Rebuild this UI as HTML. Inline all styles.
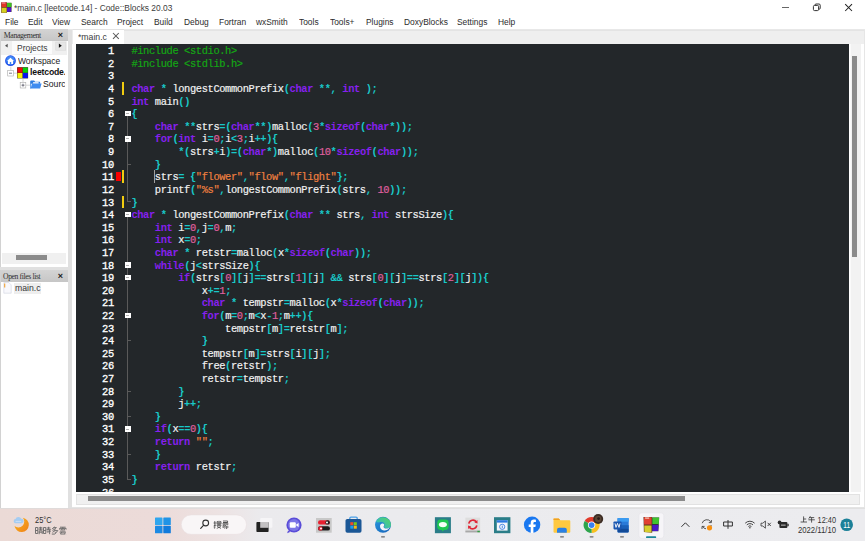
<!DOCTYPE html>
<html><head><meta charset="utf-8">
<style>
*{margin:0;padding:0;box-sizing:border-box}
html,body{width:865px;height:541px;overflow:hidden;background:#efefef;font-family:"Liberation Sans",sans-serif}
.abs{position:absolute}
#title{left:0;top:0;width:865px;height:15px;background:#fff}
#title .t{left:14px;top:1.5px;font-size:9.6px;line-height:12px;color:#3c3c3c;white-space:nowrap;transform-origin:0 0;transform:scaleX(.873)}
#menu{left:0;top:15px;width:865px;height:14.500px;background:#fff;border-bottom:1px solid #e8e8e8}
#menu span{position:absolute;top:0;font-size:9.6px;line-height:13px;color:#2c2c2c;white-space:nowrap;transform-origin:0 0;transform:scaleX(.875)}
/* left panels */
.panel{background:#fff;border-left:1px solid #d2d2d2;overflow:hidden}
#mgmt{left:-0.500px;top:29px;width:68px;height:237.800px}
#ofl{left:-0.500px;top:270.300px;width:68px;height:237.500px}
.phead{left:0;top:0;width:67px;height:11.500px;background:linear-gradient(#d4d4d4,#c6c6c6);font-family:"Liberation Serif",serif;font-size:7.8px;line-height:13px;color:#303030;padding-left:3.2px;letter-spacing:-0.35px;white-space:nowrap}
.px{left:57.300px;top:0.500px;font-size:9px;line-height:10px;color:#222;font-weight:bold}
.tree{font-size:9.8px;line-height:12px;color:#222;white-space:nowrap;transform-origin:0 0;transform:scaleX(.885)}
/* editor */
#nb{left:71.500px;top:30px;width:793px;height:477px;background:#fff}
#tabstrip{left:123.500px;top:29.500px;width:741.500px;height:14.500px;background:#efefef;border-top:1px solid #e4e4e4}
#tab{left:71.500px;top:29.400px;width:52px;height:14.800px;background:#fff;border-top:0.700px solid #e2e2e2;border-left:1px solid #ececec}
#editor{left:75.800px;top:44.200px;width:773px;height:447.800px;background:#23272a;overflow:hidden}
.ln{position:relative;height:12.62px;white-space:pre;font-family:"Liberation Mono",monospace;font-size:10.4px;line-height:12.62px;letter-spacing:-0.378px;color:#f2f2f2;-webkit-text-stroke:0.18px}
.no{position:absolute;left:0;width:38px;text-align:right;color:#fff;-webkit-text-stroke:0.32px}
.cd{position:absolute;left:55.600px}
.p{color:#14a814}
.k{color:#8620ee;font-weight:bold;-webkit-text-stroke:0}
.o{color:#19c8c8;font-weight:bold;-webkit-text-stroke:0}
.n{color:#e060a0}
.s{color:#f08040}
#lines{position:absolute;left:0;top:1px;width:100%}
.fb{position:absolute;left:49px;width:5.900px;height:5.700px;background:#fff}
.fb:after{content:"";position:absolute;left:1.200px;top:2.400px;width:3.500px;height:0.900px;background:#b0b0b0}
.fl{position:absolute;left:51.500px;width:1px;background:#5a5a5a}
.ft{position:absolute;left:51.500px;width:3.500px;height:1px;background:#5a5a5a}
.yb{position:absolute;left:46.200px;width:2.200px;height:12.620px;background:#f0cc10}
/* scrollbars */
.thumb{background:#8b8b8b}
/* taskbar */
#tb{left:0;top:508px;width:865px;height:33px;background:linear-gradient(90deg,#ebdad6 0%,#ecdbd9 18%,#ede2e2 25%,#ebeaed 30%,#ebebee 45%,#ececef 100%);box-shadow:inset 0 0.800px 0 #dcdcdc}
</style></head><body>
<div id="title" class="abs">
 <svg class="abs" style="left:1.200px;top:1.900px" width="11" height="11" viewBox="0 0 11 11"><rect x="0.200" y="0.300" width="5.700" height="10.600" fill="#5a3020"/><rect x="5.600" y="0.800" width="4.900" height="9.200" fill="#403030"/><rect x="0.500" y="0.300" width="5" height="4.800" fill="#e23628"/><rect x="0.800" y="0.300" width="3.600" height="1.300" fill="#f08890"/><rect x="6" y="0.900" width="4.500" height="4.100" fill="#3fc020"/><rect x="0.600" y="5.700" width="5" height="5" fill="#d6d020"/><rect x="6" y="5.500" width="4.100" height="4.300" fill="#5014d0"/></svg>
 <div class="abs t">*main.c [leetcode.14] - Code::Blocks 20.03</div>
 <svg class="abs" style="left:780px;top:0" width="85" height="15" viewBox="0 0 85 15"><path d="M2 7.5h7" stroke="#555" stroke-width="0.9" fill="none"/><rect x="33.400" y="5.400" width="5.200" height="5.200" rx="1.200" stroke="#333" stroke-width="1" fill="none"/><path d="M35 5.400v-0.400a1 1 0 0 1 1 -1h3a1.200 1.200 0 0 1 1.200 1.200v3a1 1 0 0 1 -1 1h-0.600" stroke="#333" stroke-width="1" fill="none"/><path d="M65.200 4.200l6.800 6.800M72 4.200l-6.800 6.800" stroke="#222" stroke-width="1.050" fill="none"/></svg>
</div>
<div id="menu" class="abs">
<span style="left:5px">File</span><span style="left:28px">Edit</span><span style="left:52px">View</span><span style="left:81px">Search</span><span style="left:117px">Project</span><span style="left:153.500px">Build</span><span style="left:183.500px">Debug</span><span style="left:218.500px">Fortran</span><span style="left:256px">wxSmith</span><span style="left:299px">Tools</span><span style="left:329.500px">Tools+</span><span style="left:365.500px">Plugins</span><span style="left:403.500px">DoxyBlocks</span><span style="left:457px">Settings</span><span style="left:497.500px">Help</span>
</div>

<div class="abs" style="left:0;top:29.500px;width:71.500px;height:478.500px;background:#e0e0e0"></div>
<!-- Management panel -->
<div id="mgmt" class="abs panel">
 <div class="abs phead">Management</div>
 <div class="abs px">×</div>
 <div class="abs" style="left:0;top:11.500px;width:66px;height:14px;background:#f0f0f0"></div>
 <div class="abs" style="left:11.300px;top:12px;width:40px;height:13.200px;background:#fbfbfb"></div>
 <div class="abs tree" style="left:16.200px;top:12.500px;font-size:9.8px;color:#3a3a3a;transform:scaleX(.862)">Projects</div>
 <svg class="abs" style="left:-0.600px;top:10.900px" width="67" height="14" viewBox="0 0 67 14"><path d="M7.700 3.800v3.800l-2.700-1.900z" fill="#505050"/><rect x="55.800" y="2" width="10" height="8.200" fill="#e6e6e6" stroke="#d4d4d4" stroke-width="0.500"/><path d="M58.900 3.600v4.200l2.900-2.100z" fill="#111"/></svg>
 <!-- tree -->
 <svg class="abs" style="left:0;top:26px" width="66" height="40" viewBox="0 0 66 40">
  <path d="M9.800 11.500v4M12.500 18.200h4 M22 24v4M25 30.200h4" stroke="#bbb" stroke-width="0.6" fill="none"/>
  <circle cx="9.500" cy="5.700" r="5.400" fill="#2450e8"/><circle cx="9.500" cy="5.300" r="4.400" fill="#3f86f5"/>
  <path d="M6 6l3.500-3.200 3.500 3.200h-1v2.900h-1.800v-2h-1.400v2h-1.800v-2.900z" fill="#fff"/>
  <rect x="6.700" y="15.400" width="5.600" height="5.600" fill="#fff" stroke="#aaa" stroke-width="0.6"/><path d="M8 18.200h3" stroke="#445" stroke-width="0.7"/>
  <rect x="16.100" y="12.200" width="11" height="11.200" fill="#403020"/><rect x="16.500" y="12.600" width="5" height="5.100" fill="#f00808"/><rect x="21.800" y="12.600" width="5" height="5.100" fill="#08d008"/><rect x="16.500" y="18" width="5" height="5.100" fill="#f4f008"/><rect x="21.800" y="18" width="5" height="5.100" fill="#0810f0"/>
  <rect x="19.200" y="27.400" width="5.600" height="5.600" fill="#fff" stroke="#aaa" stroke-width="0.6"/><path d="M20.500 30.200h3M22 28.700v3" stroke="#445" stroke-width="0.7"/>
  <g transform="translate(0.600,-0.900)"><path d="M29 26.500h3.500l1 1.200h5v2h-9.500z" fill="#2f7de0"/><path d="M31.500 28h5.500v2h-5.500z" fill="#e8f0fc"/><path d="M29 34.500l1.500-5h9.500l-1.500 5z" fill="#3f8cf0"/><path d="M29 27v7.500" stroke="#2f7de0" stroke-width="0.800"/></g>
 </svg>
 <div class="abs tree" style="left:17.500px;top:25.700px;transform:scaleX(.866)">Workspace</div>
 <div class="abs tree" style="left:29.300px;top:37.400px;font-weight:bold;color:#111;letter-spacing:-0.2px">leetcode.</div>
 <div class="abs tree" style="left:42.200px;top:49px">Source</div>
 <div class="abs" style="left:64.800px;top:26px;width:3px;height:40px;background:#fff"></div>
 <!-- h scrollbar -->
 <div class="abs" style="left:1.500px;top:223.500px;width:63.700px;height:11px;background:#f0f0f0"></div>
 <div class="abs thumb" style="left:15px;top:226.400px;width:31.300px;height:5px"></div>
</div>

<!-- Open files list -->
<div id="ofl" class="abs panel">
 <div class="abs phead" style="font-size:7.6px;padding-left:2.500px">Open files list</div>
 <div class="abs px">×</div>
 <svg class="abs" style="left:2.500px;top:12px" width="9" height="12" viewBox="0 0 9 12"><path d="M0.800 0.500h5l2.400 2.400v8.300h-7.400z" fill="#f8f8fc" stroke="#d0d4e0" stroke-width="0.6"/><path d="M1.700 1.500v4" stroke="#f0a030" stroke-width="1.100"/></svg>
 <div class="abs" style="left:13.300px;top:12.300px;width:26.800px;height:11px;background:#eeeeee"></div>
 <div class="abs tree" style="left:14.200px;top:11.400px;color:#333">main.c</div>
</div>

<!-- notebook / editor -->
<div id="nb" class="abs"></div>
<div id="tabstrip" class="abs"></div>
<div id="tab" class="abs">
 <div class="abs" style="left:5.300px;top:-0.500px;font-size:9.8px;line-height:13px;color:#3a3a3a;white-space:nowrap;transform-origin:0 0;transform:scaleX(.885)">*main.c</div>
 <svg class="abs" style="left:39.300px;top:2.100px" width="8" height="8" viewBox="0 0 8 8"><path d="M1 1l5.800 5.800M6.800 1l-5.800 5.800" stroke="#5a5a5a" stroke-width="1.050"/></svg>
</div>
<div id="editor" class="abs">
<div id="lines">
<div class="ln"><span class="no">1</span><span class="cd"><span class="p">#include &lt;stdio.h&gt;</span></span></div>
<div class="ln"><span class="no">2</span><span class="cd"><span class="p">#include &lt;stdlib.h&gt;</span></span></div>
<div class="ln"><span class="no">3</span><span class="cd"></span></div>
<div class="ln"><span class="no">4</span><span class="cd"><span class="k">char</span> <span class="o">*</span> longestCommonPrefix<span class="o">(</span><span class="k">char</span> <span class="o">*</span><span class="o">*</span><span class="o">,</span> <span class="k">int</span> <span class="o">)</span><span class="o">;</span></span></div>
<div class="ln"><span class="no">5</span><span class="cd"><span class="k">int</span> main<span class="o">(</span><span class="o">)</span></span></div>
<div class="ln"><span class="no">6</span><span class="cd"><span class="o">{</span></span></div>
<div class="ln"><span class="no">7</span><span class="cd">    <span class="k">char</span> <span class="o">*</span><span class="o">*</span>strs<span class="o">=</span><span class="o">(</span><span class="k">char</span><span class="o">*</span><span class="o">*</span><span class="o">)</span>malloc<span class="o">(</span><span class="n">3</span><span class="o">*</span><span class="k">sizeof</span><span class="o">(</span><span class="k">char</span><span class="o">*</span><span class="o">)</span><span class="o">)</span><span class="o">;</span></span></div>
<div class="ln"><span class="no">8</span><span class="cd">    <span class="k">for</span><span class="o">(</span><span class="k">int</span> i<span class="o">=</span><span class="n">0</span><span class="o">;</span>i<span class="o">&lt;</span><span class="n">3</span><span class="o">;</span>i<span class="o">+</span><span class="o">+</span><span class="o">)</span><span class="o">{</span></span></div>
<div class="ln"><span class="no">9</span><span class="cd">        <span class="o">*</span><span class="o">(</span>strs<span class="o">+</span>i<span class="o">)</span><span class="o">=</span><span class="o">(</span><span class="k">char</span><span class="o">*</span><span class="o">)</span>malloc<span class="o">(</span><span class="n">10</span><span class="o">*</span><span class="k">sizeof</span><span class="o">(</span><span class="k">char</span><span class="o">)</span><span class="o">)</span><span class="o">;</span></span></div>
<div class="ln"><span class="no">10</span><span class="cd">    <span class="o">}</span></span></div>
<div class="ln"><span class="no">11</span><span class="cd">    strs<span class="o">=</span> <span class="o">{</span><span class="s">&quot;flower&quot;</span><span class="o">,</span><span class="s">&quot;flow&quot;</span><span class="o">,</span><span class="s">&quot;flight&quot;</span><span class="o">}</span><span class="o">;</span></span></div>
<div class="ln"><span class="no">12</span><span class="cd">    printf<span class="o">(</span><span class="s">&quot;%s&quot;</span><span class="o">,</span>longestCommonPrefix<span class="o">(</span>strs<span class="o">,</span> <span class="n">10</span><span class="o">)</span><span class="o">)</span><span class="o">;</span></span></div>
<div class="ln"><span class="no">13</span><span class="cd"><span class="o">}</span></span></div>
<div class="ln"><span class="no">14</span><span class="cd"><span class="k">char</span> <span class="o">*</span> longestCommonPrefix<span class="o">(</span><span class="k">char</span> <span class="o">*</span><span class="o">*</span> strs<span class="o">,</span> <span class="k">int</span> strsSize<span class="o">)</span><span class="o">{</span></span></div>
<div class="ln"><span class="no">15</span><span class="cd">    <span class="k">int</span> i<span class="o">=</span><span class="n">0</span><span class="o">,</span>j<span class="o">=</span><span class="n">0</span><span class="o">,</span>m<span class="o">;</span></span></div>
<div class="ln"><span class="no">16</span><span class="cd">    <span class="k">int</span> x<span class="o">=</span><span class="n">0</span><span class="o">;</span></span></div>
<div class="ln"><span class="no">17</span><span class="cd">    <span class="k">char</span> <span class="o">*</span> retstr<span class="o">=</span>malloc<span class="o">(</span>x<span class="o">*</span><span class="k">sizeof</span><span class="o">(</span><span class="k">char</span><span class="o">)</span><span class="o">)</span><span class="o">;</span></span></div>
<div class="ln"><span class="no">18</span><span class="cd">    <span class="k">while</span><span class="o">(</span>j<span class="o">&lt;</span>strsSize<span class="o">)</span><span class="o">{</span></span></div>
<div class="ln"><span class="no">19</span><span class="cd">        <span class="k">if</span><span class="o">(</span>strs<span class="o">[</span><span class="n">0</span><span class="o">]</span><span class="o">[</span>j<span class="o">]</span><span class="o">=</span><span class="o">=</span>strs<span class="o">[</span><span class="n">1</span><span class="o">]</span><span class="o">[</span>j<span class="o">]</span> <span class="o">&amp;</span><span class="o">&amp;</span> strs<span class="o">[</span><span class="n">0</span><span class="o">]</span><span class="o">[</span>j<span class="o">]</span><span class="o">=</span><span class="o">=</span>strs<span class="o">[</span><span class="n">2</span><span class="o">]</span><span class="o">[</span>j<span class="o">]</span><span class="o">)</span><span class="o">{</span></span></div>
<div class="ln"><span class="no">20</span><span class="cd">            x<span class="o">+</span><span class="o">=</span><span class="n">1</span><span class="o">;</span></span></div>
<div class="ln"><span class="no">21</span><span class="cd">            <span class="k">char</span> <span class="o">*</span> tempstr<span class="o">=</span>malloc<span class="o">(</span>x<span class="o">*</span><span class="k">sizeof</span><span class="o">(</span><span class="k">char</span><span class="o">)</span><span class="o">)</span><span class="o">;</span></span></div>
<div class="ln"><span class="no">22</span><span class="cd">            <span class="k">for</span><span class="o">(</span>m<span class="o">=</span><span class="n">0</span><span class="o">;</span>m<span class="o">&lt;</span>x<span class="o">-</span><span class="n">1</span><span class="o">;</span>m<span class="o">+</span><span class="o">+</span><span class="o">)</span><span class="o">{</span></span></div>
<div class="ln"><span class="no">23</span><span class="cd">                tempstr<span class="o">[</span>m<span class="o">]</span><span class="o">=</span>retstr<span class="o">[</span>m<span class="o">]</span><span class="o">;</span></span></div>
<div class="ln"><span class="no">24</span><span class="cd">            <span class="o">}</span></span></div>
<div class="ln"><span class="no">25</span><span class="cd">            tempstr<span class="o">[</span>m<span class="o">]</span><span class="o">=</span>strs<span class="o">[</span>i<span class="o">]</span><span class="o">[</span>j<span class="o">]</span><span class="o">;</span></span></div>
<div class="ln"><span class="no">26</span><span class="cd">            free<span class="o">(</span>retstr<span class="o">)</span><span class="o">;</span></span></div>
<div class="ln"><span class="no">27</span><span class="cd">            retstr<span class="o">=</span>tempstr<span class="o">;</span></span></div>
<div class="ln"><span class="no">28</span><span class="cd">        <span class="o">}</span></span></div>
<div class="ln"><span class="no">29</span><span class="cd">        j<span class="o">+</span><span class="o">+</span><span class="o">;</span></span></div>
<div class="ln"><span class="no">30</span><span class="cd">    <span class="o">}</span></span></div>
<div class="ln"><span class="no">31</span><span class="cd">    <span class="k">if</span><span class="o">(</span>x<span class="o">=</span><span class="o">=</span><span class="n">0</span><span class="o">)</span><span class="o">{</span></span></div>
<div class="ln"><span class="no">32</span><span class="cd">    <span class="k">return</span> <span class="s">&quot;&quot;</span><span class="o">;</span></span></div>
<div class="ln"><span class="no">33</span><span class="cd">    <span class="o">}</span></span></div>
<div class="ln"><span class="no">34</span><span class="cd">    <span class="k">return</span> retstr<span class="o">;</span></span></div>
<div class="ln"><span class="no">35</span><span class="cd"><span class="o">}</span></span></div>
<div class="ln"><span class="no">36</span><span class="cd"></span></div>
</div>
<div class="fl" style="top:69.41px;height:88.34px"></div>
<div class="fl" style="top:170.37px;height:265.02px"></div>
<div class="ft" style="top:119.39px"></div>
<div class="ft" style="top:157.25px"></div>
<div class="ft" style="top:296.07px"></div>
<div class="ft" style="top:346.55px"></div>
<div class="ft" style="top:371.79px"></div>
<div class="ft" style="top:409.65px"></div>
<div class="ft" style="top:434.89px"></div>
<div class="fb" style="top:66.56px"></div>
<div class="fb" style="top:91.80px"></div>
<div class="fb" style="top:167.52px"></div>
<div class="fb" style="top:218.00px"></div>
<div class="fb" style="top:230.62px"></div>
<div class="fb" style="top:268.48px"></div>
<div class="fb" style="top:382.06px"></div>
<div class="yb" style="top:37.86px"></div>
<div class="yb" style="top:126.20px"></div>
<div class="yb" style="top:151.44px"></div>
<div style="position:absolute;left:40.2px;top:128.00px;width:5.3px;height:9px;background:#f80000"></div>
<div style="position:absolute;left:78.3px;top:126.20px;width:0.8px;height:12.6px;background:#a0a0a0"></div>
</div>
<!-- v scrollbar -->
<div class="abs" style="left:849.500px;top:44px;width:11px;height:448px;background:#f2f2f2;border-left:1px solid #fafafa"></div>
<div class="abs thumb" style="left:852.300px;top:56px;width:5.200px;height:200.500px"></div>
<div class="abs" style="left:863.500px;top:29.500px;width:1.500px;height:478px;background:#e6e6e6"></div>
<!-- h scrollbar -->
<div class="abs" style="left:75.800px;top:494px;width:784.500px;height:10.500px;background:#f0f0f0;border:1px solid #e2e2e2"></div>
<div class="abs thumb" style="left:87.500px;top:496.300px;width:597px;height:4.400px"></div>
<div class="abs" style="left:71.500px;top:506.500px;width:793px;height:1.500px;background:#e4e4e4"></div>

<!-- taskbar -->
<div id="tb" class="abs">
<svg class="abs" style="left:0;top:0" width="865" height="33" viewBox="0 508 865 33" font-family="Liberation Sans, sans-serif">
<defs>
<linearGradient id="moon" x1="0" y1="0" x2="1" y2="1"><stop offset="0" stop-color="#f8b820"/><stop offset="1" stop-color="#f08018"/></linearGradient>
<linearGradient id="edge1" x1="0" y1="0" x2="1" y2="1"><stop offset="0" stop-color="#2a9adf"/><stop offset="1" stop-color="#1560b8"/></linearGradient>
<linearGradient id="edge2" x1="0" y1="1" x2="1" y2="0"><stop offset="0" stop-color="#2ab0d8"/><stop offset="1" stop-color="#58d860"/></linearGradient>
</defs>
<!-- weather -->
<path d="M14.51 526.03A7.2 7.2 0 1 0 22.83 517.71A5.9 5.9 0 0 1 14.51 526.03z" fill="url(#moon)"/>
<path d="M15.200 523.200a2.100 2.100 0 0 1 0.300 -4.100a3.100 3.100 0 0 1 5.800 -0.300a2.200 2.200 0 0 1 0.300 4.400z" fill="#a4ccf2"/><path d="M15.600 521.400h5.600" stroke="#d8e8fa" stroke-width="0.700"/>
<text x="35" y="522.700" font-size="8.800" fill="#303030" textLength="16.600" lengthAdjust="spacingAndGlyphs">25°C</text>
<!-- CJK approx: 晴時多雲 -->
<g stroke="#666" stroke-width="0.900" fill="none">
 <path d="M35.500 527.500h2.300v6h-2.300zM35.500 530.500h2.300 M38.800 527.800h3.600M38.600 529.200h4M40.600 526.800v3.400M39.200 530.800h3v3.200M39.200 530.800v3.400M39.200 532.200h3"/>
 <path d="M43.500 527.500h2.300v6h-2.300zM43.500 530.500h2.300 M46.800 528h3.600M48.600 526.800v2.600M46.600 529.600h4.200M46.800 531.200h4M49.600 530v4.200M47.600 532.200l0.800 0.800"/>
 <path d="M54.500 526.800l-2.600 2.400M53.800 527.600h2.600l-4 3.200M53.500 528.800l1 0.800 M55.500 529.800l-3 2.800M54.800 530.600h3l-3 3.500h-3M54.500 531.800l1.200 0.900"/>
 <path d="M60 527.200h5.600M59.500 528.400h6.600v1.200M59.500 528.400v1.200M62.800 527.200v3M60.600 529.400h1.400M63.600 529.400h1.400M60.200 531h5M59.600 532.200h6.400M61.800 532.200l-1.400 1.800h4.600M64.500 533l1 1.200"/>
</g>
<!-- windows logo -->
<rect x="155" y="517.500" width="7.500" height="7.500" rx="0.600" fill="#2fa6ee"/><rect x="163.300" y="517.500" width="7.500" height="7.500" rx="0.600" fill="#1f93e6"/><rect x="155" y="525.800" width="7.500" height="7.500" rx="0.600" fill="#1c8ae4"/><rect x="163.300" y="525.800" width="7.500" height="7.500" rx="0.600" fill="#117bdc"/>
<!-- search pill -->
<rect x="181.300" y="514.900" width="65.200" height="19.400" rx="9.700" fill="#f9f6f7" stroke="#eadfe0" stroke-width="0.600"/>
<circle cx="205.700" cy="523" r="2.900" fill="none" stroke="#333" stroke-width="1.100"/><path d="M203.700 525.200l-3 3.200" stroke="#333" stroke-width="1.200" stroke-linecap="round"/>
<g stroke="#444" stroke-width="0.800" fill="none">
 <path d="M213.600 523h2.400M214.800 521v7.200l-1 -0.400M213.600 526l2.400 -1 M217 521.600h1.400M219.600 521.600h1.400M217 521.600v2.600h4v-2.600M217 523h4M219 520.800v4.400M216.600 525.400h4.800M217.200 526.400l3.800 2M220.800 526.400l-4 2"/>
 <path d="M223 521h4.600v1.600h-4.600M223 522.600h4.600M222.400 523.800h6M223.200 524.800h2.200v1.200h-2.200zM226.200 524.800h2M222.200 527h6.400M226.800 526v2.600l-1 -0.200M223.600 527.600l1 0.800"/>
</g>
<!-- task view -->
<rect x="260.200" y="518" width="12.200" height="9.800" rx="1" fill="#f6f5f7"/><rect x="256.400" y="522" width="12.200" height="10" rx="0.800" fill="#222"/><rect x="260.200" y="522" width="8.400" height="5.800" fill="#c2c0c2"/>
<!-- chat -->
<circle cx="294" cy="525" r="7.600" fill="#5a4cd8"/><path d="M288 530.500l-0.800 2.700l3.400 -1.500z" fill="#5a4cd8"/><circle cx="294" cy="525" r="5.900" fill="#7c76e6"/>
<rect x="289.800" y="522.300" width="6" height="5.400" rx="1" fill="#fff"/><path d="M296.200 524.600l2.400 -1.600v4l-2.400 -1.600z" fill="#fff"/>
<!-- toggles icon -->
<rect x="316" y="518" width="15.700" height="14.700" fill="#c8c8c8"/><rect x="318" y="520.200" width="12" height="4.400" rx="2.200" fill="#e82030"/><circle cx="327.600" cy="522.400" r="2.200" fill="#222"/><circle cx="327" cy="522.400" r="1" fill="#fff"/>
<rect x="318" y="526.200" width="12" height="4.400" rx="2.200" fill="#1a1a1a"/><circle cx="320.400" cy="528.400" r="2.200" fill="#e82030"/><circle cx="321" cy="528.400" r="1" fill="#fff"/>
<!-- store -->
<path d="M349.800 519.500v-1.200a1.200 1.200 0 0 1 1.200 -1.200h5a1.200 1.200 0 0 1 1.200 1.200v1.200" fill="none" stroke="#4aa0e8" stroke-width="1.300"/>
<rect x="345.500" y="519" width="16" height="13.700" rx="1.800" fill="#1b5796"/>
<rect x="350.300" y="522.200" width="3" height="3" fill="#f04a28"/><rect x="353.800" y="522.200" width="3" height="3" fill="#78c818"/><rect x="350.300" y="525.700" width="3" height="3" fill="#18a0f0"/><rect x="353.800" y="525.700" width="3" height="3" fill="#f8b810"/>
<!-- edge -->
<circle cx="383" cy="524.800" r="8" fill="url(#edge1)"/>
<path d="M376 521.500a8 8 0 0 1 15 3.300c0 2.600 -2.200 3.800 -4.400 3.800c-1.600 0 -2.600 -0.800 -2.600 -1.800c0 -0.700 0.600 -1.100 0.600 -2.100c0 -1.400 -1.500 -2.600 -3.400 -2.600c-2.200 0 -4.200 1 -5.200 -0.600z" fill="url(#edge2)"/>
<path d="M384.200 524.700c0 1 -0.600 1.400 -0.600 2.100c0 1 1 1.800 2.600 1.800c1.400 0 2.600 -0.400 3.400 -1.300c-1 2.300 -3.300 3.400 -5.600 3.200c-2.600 -0.300 -4.200 -2.400 -4 -4.500c0.100 -1.500 1.200 -2.600 2.300 -2.600c1.200 0 1.900 0.600 1.900 1.300z" fill="#f4f4f8"/>
<rect x="381" y="536.200" width="4" height="1.200" rx="0.600" fill="#6a6a6a"/>
<!-- LINE -->
<rect x="434.900" y="517.200" width="16" height="16" fill="#2a7d88"/><rect x="437.200" y="519.600" width="11.400" height="10.400" rx="3.400" fill="#1ec850"/><path d="M441.500 529.600l1.200 2l1.600 -2z" fill="#1ec850"/><ellipse cx="442.900" cy="524.600" rx="4" ry="2.600" fill="#f4fff6"/>
<!-- refresh -->
<rect x="465.400" y="517.600" width="14.800" height="14.800" fill="#dedede"/><rect x="465.400" y="530.600" width="14.800" height="1.800" fill="#a8a8a8"/><rect x="477.400" y="530.800" width="2.400" height="1.400" fill="#30a040"/>
<path d="M468.800 523.600a4.200 4.200 0 0 1 7.600 -1.600M476.800 525.400a4.200 4.200 0 0 1 -7.600 1.600" fill="none" stroke="#e02838" stroke-width="1.600"/><path d="M477.400 520l0.200 3.400l-3.200 -0.800zM468.200 529l-0.200 -3.400l3.200 0.800z" fill="#e02838"/>
<!-- blue window -->
<rect x="494" y="517.200" width="16.400" height="16" fill="#2a7d88"/><rect x="496.800" y="520.200" width="10.800" height="10.400" fill="#f4f6fc"/><rect x="496.800" y="520.200" width="10.800" height="2.400" fill="#2a78e0"/><circle cx="502.200" cy="526.800" r="2.600" fill="none" stroke="#3a80e0" stroke-width="0.900"/><rect x="501.800" y="525.600" width="0.900" height="2.600" fill="#3a80e0"/>
<!-- facebook -->
<circle cx="532.100" cy="524.800" r="8.200" fill="#1a78f0"/>
<path d="M533.400 533v-6h2l0.400 -2.400h-2.400v-1.400c0 -0.800 0.400 -1.300 1.400 -1.300h1.100v-2.100c-0.400 -0.100 -1.200 -0.200 -2 -0.200c-2 0 -3.200 1.200 -3.200 3.300v1.700h-2v2.400h2v6z" fill="#fff"/>
<!-- folder -->
<path d="M553.500 519.600a1 1 0 0 1 1 -1h4.200l1.600 1.600h9a1 1 0 0 1 1 1v10.500a1 1 0 0 1 -1 1h-14.800a1 1 0 0 1 -1 -1z" fill="#ffc940"/><path d="M553.500 518.600h5.200l1.400 1.400h-6.600z" fill="#f0a020"/>
<path d="M557 532.700v-3a2 2 0 0 1 2 -2h5.800a2 2 0 0 1 2 2v3z" fill="#2a80e4"/>
<rect x="560" y="536.200" width="4" height="1.200" rx="0.600" fill="#6a6a6a"/>
<!-- chrome -->
<path d="M591.600 525.100L584.670 521.100A8 8 0 0 1 598.530 521.100Z" fill="#e23a2c"/>
<path d="M591.600 525.100L598.530 521.100A8 8 0 0 1 591.600 533.100Z" fill="#f8c020"/>
<path d="M591.600 525.100L591.600 533.100A8 8 0 0 1 584.670 521.100Z" fill="#2ea44c"/>
<path d="M591.600 521.400h7.100l-0.170 -0.300" fill="none"/>
<circle cx="591.600" cy="525.100" r="3.700" fill="#fff"/><circle cx="591.600" cy="525.100" r="2.900" fill="#3a80f0"/>
<circle cx="598.200" cy="519" r="5" fill="#3c2c24"/><circle cx="598.200" cy="519" r="3.200" fill="#5a4636"/><circle cx="598.600" cy="518.600" r="1.400" fill="#2a1c18"/>
<rect x="589.600" y="536.200" width="4" height="1.200" rx="0.600" fill="#6a6a6a"/>
<!-- word -->
<rect x="617.500" y="518" width="11.200" height="14.500" rx="1" fill="#2a7ad8"/><rect x="617.500" y="518" width="11.200" height="3.700" fill="#3a9af0"/><rect x="617.500" y="525.200" width="11.200" height="3.700" fill="#1a60b8"/><rect x="617.500" y="528.800" width="11.200" height="3.700" rx="0.800" fill="#124a98"/>
<rect x="613.500" y="521.400" width="8" height="8" rx="0.800" fill="#1a56b0"/><path d="M615 523.400l1 4l1.500 -4l1.500 4l1 -4" fill="none" stroke="#fff" stroke-width="0.900"/>
<rect x="620" y="536.200" width="4" height="1.200" rx="0.600" fill="#6a6a6a"/>
<!-- codeblocks active -->
<rect x="638.900" y="512.800" width="24.900" height="25.600" rx="2.800" fill="#f6f5f8" stroke="#e4e3e8" stroke-width="0.600"/>
<path d="M643.500 517h8.700v15.700l-8.300 -0.600z" fill="#5a3020"/><path d="M651.800 517.400h7.400l-0.800 13.800h-6.600z" fill="#303040"/>
<path d="M643.900 517.200h7.700v7.200h-7.500z" fill="#e04030"/><path d="M645 517.200h4.200v1.800h-4z" fill="#f0a090"/>
<path d="M652.400 517.600h6.700l-0.300 6.400h-6.400z" fill="#40c430"/>
<path d="M644.200 525.400h7.300v7l-7 -0.500z" fill="#d6ce2c"/>
<path d="M652.400 525h6l-0.300 5.900h-5.700z" fill="#4a18c8"/>
<rect x="646" y="536.300" width="10.200" height="1.700" rx="0.850" fill="#1a8698"/>
<!-- tray -->
<path d="M681.400 526.800l4 -4l4 4" fill="none" stroke="#333" stroke-width="1"/>
<path d="M702.200 523.200a4.800 4.800 0 0 1 8.600 -1.400M711.200 525a4.800 4.800 0 0 1 -2 3.400M706 528.800a4.800 4.800 0 0 1 -3.600 -2.400" fill="none" stroke="#444" stroke-width="0.900"/><path d="M711.400 520v2.600h-2.600M702 529v-2.600h2.600" fill="none" stroke="#444" stroke-width="0.900"/>
<circle cx="709.500" cy="527.800" r="2.600" fill="#f89010"/>
<path d="M723.600 522h8.800v4h-8.800zM728 520v8.800" fill="none" stroke="#333" stroke-width="1"/>
<path d="M745.200 523.200a6.600 6.600 0 0 1 9.400 0M746.800 524.900a4.400 4.400 0 0 1 6.200 0M748.400 526.500a2.100 2.100 0 0 1 3 0" fill="none" stroke="#333" stroke-width="0.900"/><circle cx="749.900" cy="527.800" r="0.700" fill="#333"/>
<path d="M761 523.200h1.800l2.600 -2.200v7.200l-2.600 -2.200h-1.800z" fill="none" stroke="#333" stroke-width="0.800"/><path d="M767.600 522.800l3.200 3.200M770.800 522.800l-3.200 3.200" stroke="#333" stroke-width="0.900"/>
<rect x="779.400" y="522" width="8" height="6" rx="1" fill="#2a2a2a"/><rect x="787.400" y="523.800" width="1.300" height="2.400" fill="#2a2a2a"/><circle cx="779.600" cy="522.400" r="1.900" fill="#2a2a2a"/><rect x="781" y="524.400" width="4.600" height="1.600" fill="#888"/>
<!-- clock -->
<g stroke="#333" stroke-width="0.800" fill="none"><path d="M803.600 516.400v5.600M803.600 519h2.600M800.600 522h6.400"/><path d="M810.400 516.200l-1.600 2.400M809.600 517.600h4.600M808.400 519.800h6.400M811.600 517.600v5"/></g>
<text x="817.600" y="522.600" font-size="9" fill="#333" textLength="18.400" lengthAdjust="spacingAndGlyphs">12:40</text>
<text x="798" y="532.800" font-size="9" fill="#333" textLength="38" lengthAdjust="spacingAndGlyphs">2022/11/10</text>
<circle cx="846.700" cy="524.800" r="6.300" fill="#1b8098"/><text x="843.300" y="527.700" font-size="8.600" fill="#fff" textLength="6.800" lengthAdjust="spacingAndGlyphs">11</text>
</svg>

</div>
</body></html>
